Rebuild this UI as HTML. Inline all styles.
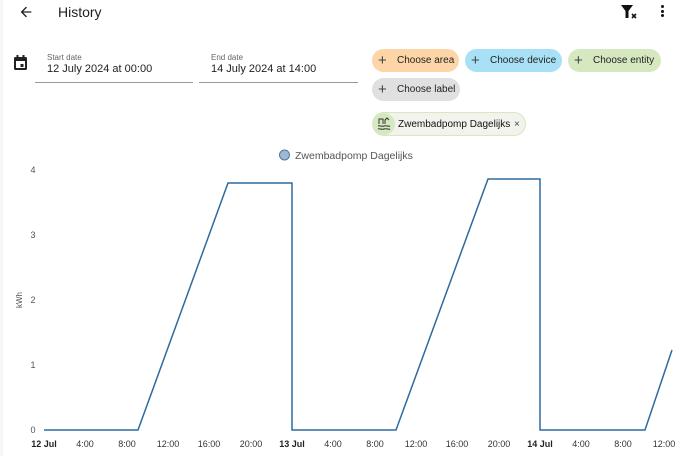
<!DOCTYPE html>
<html><head><style>
body{margin:0;width:690px;height:456px;background:#fff;font-family:"Liberation Sans",sans-serif;overflow:hidden;position:relative;color:#212121}
.a{position:absolute}
.chip{position:absolute;height:23px;border-radius:12px;font-size:10px;line-height:24px;color:#222}
.chip b{font-weight:normal;font-size:15px;position:absolute;left:6px;top:0;color:#444}
.chip span{position:absolute;left:25px}
</style></head><body>
<div class="a" style="left:0;top:0;width:3px;height:456px;background:#f6f6f6"></div>
<svg class="a" style="left:18px;top:4px" width="16" height="16" viewBox="0 0 24 24"><path d="M20 11H7.8l5.6-5.6L12 4l-8 8 8 8 1.4-1.4L7.8 13H20z" fill="#212121"/></svg>
<div class="a" style="left:58px;top:4px;font-size:14px">History</div>
<svg class="a" style="left:620px;top:4px" width="20" height="16" viewBox="0 0 20 16"><path d="M1 1h12l-4.5 6v7h-3V7z" fill="#111"/><path d="M12 10l4 4M16 10l-4 4" stroke="#111" stroke-width="1.6"/></svg>
<div class="a" style="left:661px;top:5px;width:3px"><div style="width:3px;height:3px;background:#111;border-radius:2px;margin-bottom:1.5px"></div><div style="width:3px;height:3px;background:#111;border-radius:2px;margin-bottom:1.5px"></div><div style="width:3px;height:3px;background:#111;border-radius:2px"></div></div>
<svg class="a" style="left:13px;top:55px" width="15" height="16" viewBox="0 0 15 16"><rect x="1" y="2" width="13" height="13" rx="1.5" fill="#212121"/><rect x="3" y="6" width="9" height="7" fill="#fff"/><rect x="7.5" y="9" width="3" height="3" fill="#212121"/><rect x="3.5" y="0" width="2" height="3" fill="#212121"/><rect x="9.5" y="0" width="2" height="3" fill="#212121"/></svg>
<div class="a" style="left:47px;top:53px;font-size:8px;color:#666">Start date</div>
<div class="a" style="left:47px;top:63px;font-size:11px">12 July 2024 at 00:00</div>
<div class="a" style="left:35px;top:82px;width:158px;height:1px;background:#999"></div>
<div class="a" style="left:211px;top:53px;font-size:8px;color:#666">End date</div>
<div class="a" style="left:211px;top:63px;font-size:11px">14 July 2024 at 14:00</div>
<div class="a" style="left:199px;top:82px;width:159px;height:1px;background:#999"></div>
<div class="chip" style="left:372px;top:49px;width:87px;background:#fdd5a6"><b>+</b><span>Choose area</span></div>
<div class="chip" style="left:465px;top:49px;width:97px;background:#a8e0f6"><b>+</b><span>Choose device</span></div>
<div class="chip" style="left:568px;top:49px;width:93px;background:#d5e8bf"><b>+</b><span>Choose entity</span></div>
<div class="chip" style="left:372px;top:78px;width:88px;background:#e0e0e0"><b>+</b><span>Choose label</span></div>
<div class="chip" style="left:372px;top:112px;width:152px;height:22px;background:#f3f3ee;border:1px solid #d5e8bf;line-height:23px">
<div class="a" style="left:0;top:0;width:22px;height:22px;border-radius:11px;background:#d5e8bf"></div>
<svg class="a" style="left:4px;top:4px" width="14" height="14" viewBox="0 0 14 14" fill="none" stroke="#333" stroke-width="1"><path d="M2 7V2h4v5M8 7V3l2-2 2 2M1 9c2-1 3 1 6 0s4 1 6 0M1 12c2-1 3 1 6 0s4 1 6 0"/></svg>
<span style="left:25px;color:#111">Zwembadpomp Dagelijks</span><span style="left:141px;color:#444">×</span></div>
<svg class="a" style="left:0;top:140px" width="690" height="316">
<circle cx="284.5" cy="15" r="5" fill="#9fb8cf" stroke="#4a79a5"/>
<text x="295" y="19" font-size="10.5" fill="#555" font-family="Liberation Sans">Zwembadpomp Dagelijks</text>
<g font-size="9" fill="#555" font-family="Liberation Sans" text-anchor="middle">
<text x="33" y="33">4</text><text x="33" y="98">3</text><text x="33" y="163">2</text><text x="33" y="228">1</text><text x="33" y="293">0</text>
<text transform="translate(22,160) rotate(-90)" font-size="8">kWh</text>
<g fill="#333"><text x="44" y="307" font-weight="bold" fill="#222">12 Jul</text><text x="85" y="307">4:00</text><text x="127" y="307">8:00</text><text x="168" y="307">12:00</text><text x="209" y="307">16:00</text><text x="251" y="307">20:00</text><text x="292" y="307" font-weight="bold" fill="#222">13 Jul</text><text x="333" y="307">4:00</text><text x="375" y="307">8:00</text><text x="416" y="307">12:00</text><text x="457" y="307">16:00</text><text x="499" y="307">20:00</text><text x="540" y="307" font-weight="bold" fill="#222">14 Jul</text><text x="581" y="307">4:00</text><text x="623" y="307">8:00</text><text x="664" y="307">12:00</text></g>
</g>
<path d="M44 290H138L228 43H292V290H396L488 39H540V290H645L672 210" fill="none" stroke="#2d6aa0" stroke-width="1.5"/>
</svg>
</body></html>
